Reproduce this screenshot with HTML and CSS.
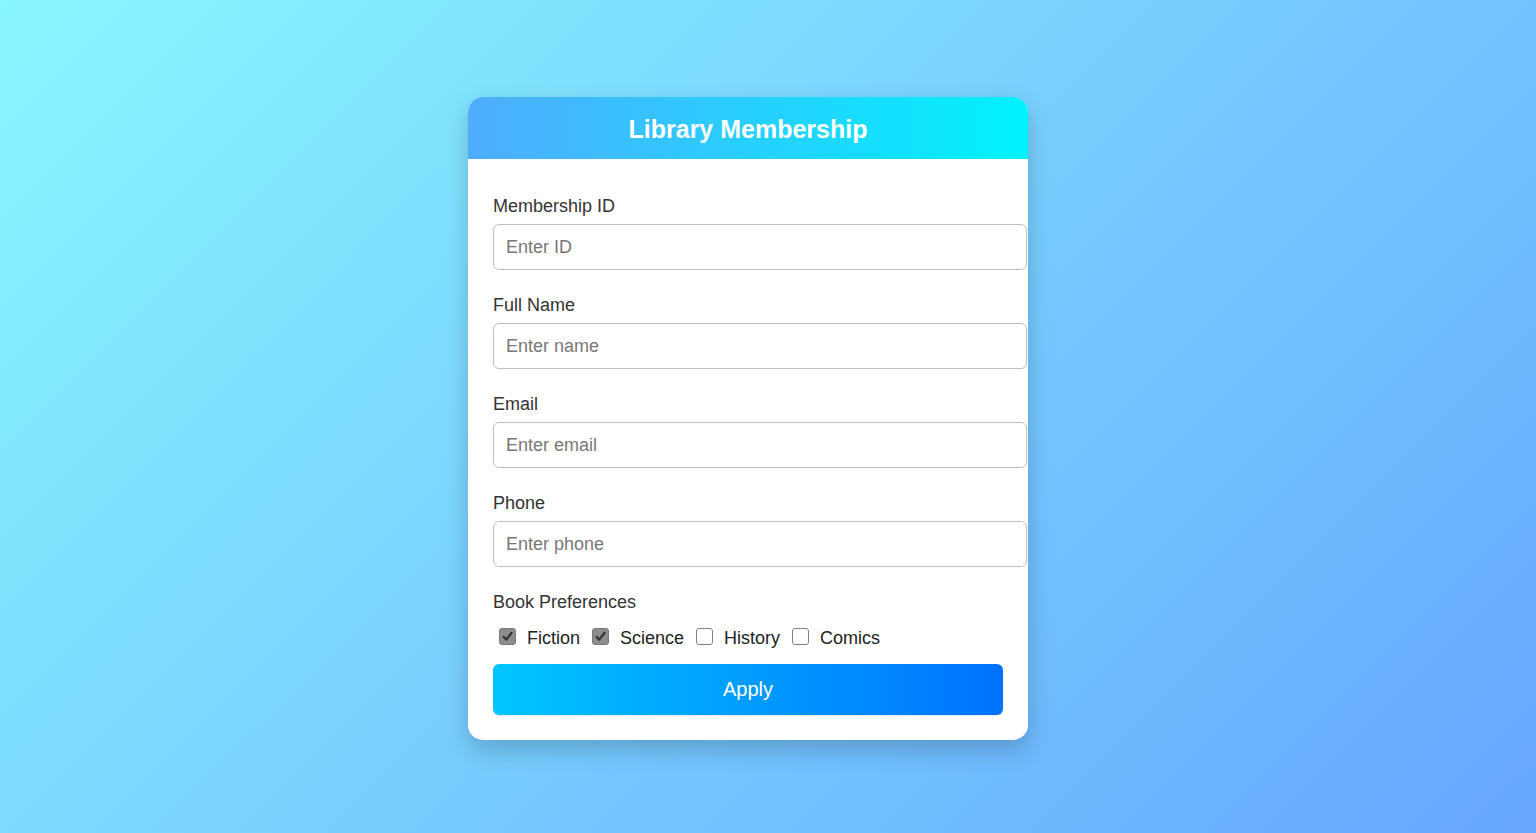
FILE: index.html
```html
<!DOCTYPE html>
<html lang="en">
<head>
<meta charset="utf-8">
<title>Library Membership</title>
<link rel="stylesheet" href="styles.css">
</head>
<body>
<div class="page">
  <div class="card">
    <div class="card-header">Library Membership</div>
    <form class="card-body">
      <div class="group">
        <label class="field-label">Membership ID</label>
        <input class="field" type="text" placeholder="Enter ID">
      </div>
      <div class="group">
        <label class="field-label">Full Name</label>
        <input class="field" type="text" placeholder="Enter name">
      </div>
      <div class="group">
        <label class="field-label">Email</label>
        <input class="field" type="email" placeholder="Enter email">
      </div>
      <div class="group">
        <label class="field-label">Phone</label>
        <input class="field" type="tel" placeholder="Enter phone">
      </div>
      <div class="prefs">
        <div class="field-label">Book Preferences</div>
        <div class="checks">
          <label class="check"><span class="box checked"><svg viewBox="0 0 17 17" width="17" height="17"><path d="M4.5 8.8 L7.3 11.6 L12.6 4.8" fill="none" stroke="#333" stroke-width="2.2" stroke-linecap="round" stroke-linejoin="round"/></svg></span><span>Fiction</span></label>
          <label class="check"><span class="box checked"><svg viewBox="0 0 17 17" width="17" height="17"><path d="M4.5 8.8 L7.3 11.6 L12.6 4.8" fill="none" stroke="#333" stroke-width="2.2" stroke-linecap="round" stroke-linejoin="round"/></svg></span><span>Science</span></label>
          <label class="check"><span class="box"></span><span>History</span></label>
          <label class="check"><span class="box"></span><span>Comics</span></label>
        </div>
      </div>
      <button class="apply" type="button">Apply</button>
    </form>
  </div>
</div>
</body>
</html>
```

FILE: styles.css
```css
html, body {
  margin: 0;
  padding: 0;
}
body {
  font-family: "Liberation Sans", Arial, sans-serif;
  background: linear-gradient(135deg, #89f7fe 0%, #66a6ff 100%);
  min-height: 100vh;
}
.page {
  min-height: 833px;
  box-sizing: border-box;
  display: flex;
  align-items: center;
  justify-content: center;
  padding: 4px 40px 0 0;
}
.card {
  width: 560px;
  background: #fff;
  border-radius: 15px;
  overflow: hidden;
  box-shadow: 0 10px 25px rgba(0, 0, 0, 0.2);
}
.card-header {
  background: linear-gradient(90deg, #4facfe 0%, #00f2fe 100%);
  color: #fff;
  text-align: center;
  font-weight: bold;
  font-size: 25px;
  line-height: 28px;
  padding: 18px 0 16px 0;
}
.card-body {
  display: block;
  margin: 0;
  padding: 36px 25px 25px 25px;
}
.group {
  margin-bottom: 24px;
}
.field-label {
  display: block;
  font-size: 18px;
  line-height: 23px;
  color: #333;
  margin-bottom: 6px;
}
.field {
  display: block;
  width: 100%;
  box-sizing: content-box;
  height: 44px;
  padding: 0 10px 0 12px;
  border: 1px solid #bdbdbd;
  border-radius: 6px;
  font-family: "Liberation Sans", Arial, sans-serif;
  font-size: 18px;
  color: #333;
  outline: none;
  margin: 0;
}
.field::placeholder {
  color: #777;
}
.checks {
  display: flex;
  align-items: center;
  gap: 6px;
  height: 34px;
  margin-bottom: 10px;
}
.check {
  display: flex;
  align-items: center;
  font-size: 18px;
  color: #222;
  padding-top: 2px;
}
.box {
  width: 15px;
  height: 15px;
  margin: 0 11px 3px 6px;
  border: 1px solid #808080;
  border-radius: 3px;
  background: #fff;
  position: relative;
  overflow: hidden;
  flex: none;
}
.box svg {
  position: absolute;
  left: -1px;
  top: -1px;
}
.box.checked {
  background: #8d8d8d;
  border-color: #7a7a7a;
}
.apply {
  display: block;
  width: 100%;
  height: 51px;
  border: none;
  border-radius: 6px;
  background: linear-gradient(90deg, #00c6ff 0%, #0072ff 100%);
  color: #fff;
  font-family: "Liberation Sans", Arial, sans-serif;
  font-size: 20px;
  cursor: pointer;
  box-shadow: 0 1px 2px rgba(0, 0, 0, 0.1);
}
```
